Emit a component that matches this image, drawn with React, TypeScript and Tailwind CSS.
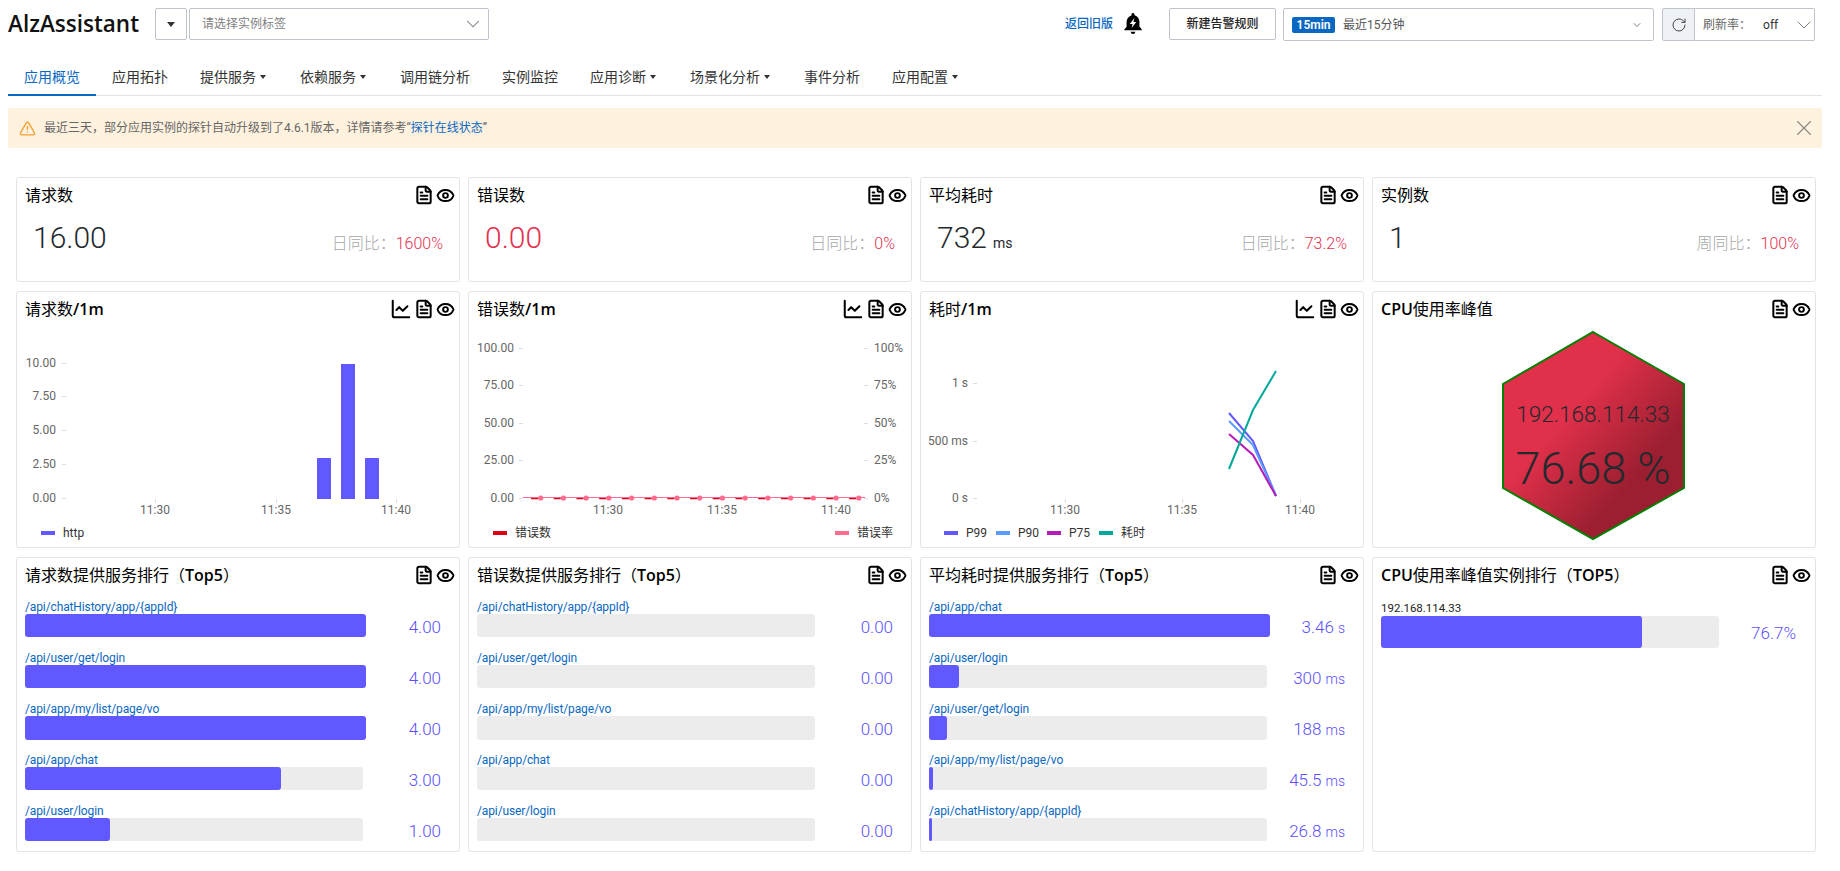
import type { ReactNode } from "react";
import { ChevronDown, RotateCw, TriangleAlert, X, FileText, Eye, ChartLine } from "lucide-react";

const BAR = "#6258ff";

const tabs = [
    { label: "应用概览", active: true },
    { label: "应用拓扑" },
    { label: "提供服务", caret: true },
    { label: "依赖服务", caret: true },
    { label: "调用链分析" },
    { label: "实例监控" },
    { label: "应用诊断", caret: true },
    { label: "场景化分析", caret: true },
    { label: "事件分析" },
    { label: "应用配置", caret: true },
];

const Caret = () => <span className="ml-1 inline-block h-0 w-0 border-x-[3px] border-t-[4px] border-x-transparent border-t-[#333] align-middle"></span>;

// latin parts of the card titles are heavier than the CJK next to them
const L = ({ children }: { children: ReactNode }) => <span className="font-semibold">{children}</span>;

const CardHeader = ({ title, chart }: { title: ReactNode; chart?: boolean }) => (
    <div className="flex h-9 items-center justify-between pb-0.5 pl-2 pr-1">
        <span className="font-['Open_Sans','Noto_Sans_CJK_SC',sans-serif] text-base leading-none text-black">{title}</span>
        <div className="flex items-center gap-[2px] text-black">
            {chart && <ChartLine size={22} strokeWidth={2.2} />}
            <FileText size={20} strokeWidth={2.4} />
            <Eye size={19} strokeWidth={2.4} />
        </div>
    </div>
);

const Stat = ({ title, value, unit, label, pct, red }: { title: string; value: string; unit?: string; label: string; pct: string; red?: boolean }) => (
    <div className="rounded-[3px] border border-[#e3e3e3]">
        <CardHeader title={title} />
        <div className="flex items-center justify-between pl-[16px] pr-4 pt-[6px]">
            <div className={`text-[30px] font-light leading-9 ${red ? "text-[#e5304f]" : "text-[#24292e]"}`}>
                {value}
                {unit && <span className="ml-1.5 text-sm font-normal">{unit}</span>}
            </div>
            <div className="pt-3 text-base font-light leading-5 text-[#a6a6a6]">
                {label}
                <span className="text-[#e5304f]">{pct}</span>
            </div>
        </div>
    </div>
);

const axisText = { fontSize: 12, fill: "#666", fontFamily: "Roboto, sans-serif" } as const;

// charts are drawn in page-like coordinates, x from the card's left edge
const ChartBox = ({ children }: { children: ReactNode }) => (
    <svg viewBox="0 0 442 219" className="h-[219px] w-[442px]">
        {children}
    </svg>
);

const YTicks = ({ items, right, tick }: { items: [string, number][]; right: number; tick: number }) => (
    <>
        {items.map(([t, y]) => (
            <g key={t}>
                <text x={right} y={y + 4} textAnchor="end" {...axisText}>{t}</text>
                <line x1={tick} x2={tick + 4} y1={y + 0.5} y2={y + 0.5} stroke="#ddd" />
            </g>
        ))}
    </>
);

const XLabels = ({ xs, tick }: { xs: number[]; tick?: boolean }) => (
    <>
        {["11:30", "11:35", "11:40"].map((t, i) => (
            <g key={t}>
                <text x={xs[i]} y={186} textAnchor="middle" {...axisText}>{t}</text>
                {tick && <line x1={xs[i] + 0.5} x2={xs[i] + 0.5} y1={171} y2={175} stroke="#ddd" />}
            </g>
        ))}
    </>
);

const Legend = ({ items }: { items: [string, string, number][] }) => (
    <>
        {items.map(([t, c, x]) => (
            <g key={t}>
                <rect x={x} y={203} width={14} height={4} fill={c} />
                <text x={x + 22} y={209} fontSize={12} fill="#333" fontFamily="Roboto,'Noto Sans CJK SC',sans-serif">{t}</text>
            </g>
        ))}
    </>
);

const RequestChart = () => (
    <ChartBox>
        <YTicks right={39} tick={45} items={[["10.00", 35], ["7.50", 68], ["5.00", 102], ["2.50", 136], ["0.00", 170]]} />
        <XLabels xs={[138, 259, 379]} tick />
        <rect x={300} y={130} width={14} height={41} fill={BAR} />
        <rect x={324} y={36} width={14} height={135} fill={BAR} />
        <rect x={348} y={130} width={14} height={41} fill={BAR} />
        <Legend items={[["http", BAR, 24]]} />
    </ChartBox>
);

const ErrorChart = () => {
    const dots = [0, 1, 2, 3, 4, 5, 6, 7, 8, 9, 10, 11, 12, 13, 14].map((i) => 71.7 + i * 22.72);
    return (
        <ChartBox>
            <YTicks right={45} tick={50} items={[["100.00", 20], ["75.00", 57], ["50.00", 95], ["25.00", 132], ["0.00", 170]]} />
            {[["100%", 20], ["75%", 57], ["50%", 95], ["25%", 132], ["0%", 170]].map(([t, y]) => (
                <g key={t}>
                    <line x1={395} x2={399} y1={Number(y) + 0.5} y2={Number(y) + 0.5} stroke="#ddd" />
                    <text x={405} y={Number(y) + 4} {...axisText}>{t}</text>
                </g>
            ))}
            <XLabels xs={[139, 253, 367]} />
            <line x1={54} x2={396} y1={170.5} y2={170.5} stroke="#e00016" strokeWidth={1.5} strokeDasharray="7 15.72" strokeDashoffset={-8} />
            <line x1={54} x2={396} y1={169.5} y2={169.5} stroke="#ff6b8f" strokeWidth={1.2} />
            {dots.map((x) => <circle key={x} cx={x} cy={170} r={2.6} fill="#ff6b8f" />)}
            <Legend items={[["错误数", "#e00016", 24], ["错误率", "#ff6b8f", 366]]} />
        </ChartBox>
    );
};

const LatencyChart = () => {
    const lines: [string, string][] = [
        [BAR, "308,85 332,113 355,168"],
        ["#5b9bff", "308,93 332,117 355,168"],
        ["#b51cb8", "308,106 332,127 355,168"],
        ["#00a99a", "308,141 332,82 355,43"],
    ];
    return (
        <ChartBox>
            <YTicks right={47} tick={52} items={[["1 s", 55], ["500 ms", 113], ["0 s", 170]]} />
            <XLabels xs={[144, 261, 379]} tick />
            {lines.map(([c, p]) => <polyline key={c} points={p} fill="none" stroke={c} strokeWidth={2} />)}
            <Legend items={[["P99", BAR, 23], ["P90", "#5b9bff", 75], ["P75", "#b51cb8", 126], ["耗时", "#00a99a", 178]]} />
        </ChartBox>
    );
};

const Hexagon = () => (
    <svg viewBox="0 0 442 219" className="h-[219px] w-[442px]">
        <defs>
            <linearGradient id="hex" x1="0" y1="0" x2="1" y2="1">
                <stop offset="0.38" stopColor="#e0304a" />
                <stop offset="0.72" stopColor="#9b1f30" />
            </linearGradient>
        </defs>
        <polygon points="220,4 311,56 311,160 220,211 130,160 130,56" fill="url(#hex)" stroke="#008000" strokeWidth={2} />
        <text x={220} y={94} textAnchor="middle" fontSize={22.5} fontWeight={300} fill="#24292e" fontFamily="Roboto, sans-serif">192.168.114.33</text>
        <text x={220} y={156} textAnchor="middle" fontSize={45} fontWeight={300} fill="#24292e" fontFamily="Roboto, sans-serif">76.68 %</text>
    </svg>
);

type Row = { path: string; pct: number; value: string; unit?: string };

const RankCard = ({ title, rows }: { title: ReactNode; rows: Row[] }) => (
    <div className="rounded-[3px] border border-[#e3e3e3]">
        <CardHeader title={title} />
        <div className="flex flex-col gap-[14px] pt-[6px]">
            {rows.map((r, i) => (
                <div key={r.path} className="flex items-start pl-2">
                    <div className="w-[338px]">
                        <div className="h-[14px] text-xs leading-[14px] tracking-[-0.01em] text-[#0a67c2]">{r.path}</div>
                        <div className={`rounded-[3px] bg-[#ececec] ${i === 2 ? "h-6 -mb-px" : "h-[23px]"}`}>
                            {/* full bars overshoot the track by a few px, same as the reference */}
                            <div className={`h-full rounded-[3px] bg-[#6258ff] ${r.pct === 100 ? "w-[341px]" : ""}`} style={r.pct === 100 ? undefined : { width: `${r.pct}%` }}></div>
                        </div>
                    </div>
                    <div className="mt-[14px] h-[23px] flex-1 whitespace-nowrap pr-[18px] text-right text-[17px] font-light leading-[26px] text-[#5a4fff]">
                        {r.value}
                        {r.unit && <span className="ml-1 text-sm">{r.unit}</span>}
                    </div>
                </div>
            ))}
        </div>
    </div>
);

const CpuCard = () => (
    <div className="rounded-[3px] border border-[#e3e3e3]">
        <CardHeader title={<><L>CPU</L>使用率峰值实例排行（<L>TOP5</L>）</>} />
        <div className="flex items-end pl-2 pt-[6px]">
            <div className="w-[338px]">
                <div className="h-4 text-[11.5px] leading-4 text-[#222]">192.168.114.33</div>
                <div className="h-8 rounded-[3px] bg-[#ececec]">
                    <div className="h-full w-[77.3%] rounded-[3px] bg-[#6258ff]"></div>
                </div>
            </div>
            <div className="h-8 flex-1 pr-[19px] text-right text-[17px] font-light leading-[34px] text-[#5a4fff]">76.7%</div>
        </div>
    </div>
);

const reqRows: Row[] = [
    { path: "/api/chatHistory/app/{appId}", pct: 100, value: "4.00" },
    { path: "/api/user/get/login", pct: 100, value: "4.00" },
    { path: "/api/app/my/list/page/vo", pct: 100, value: "4.00" },
    { path: "/api/app/chat", pct: 75.7, value: "3.00" },
    { path: "/api/user/login", pct: 25.2, value: "1.00" },
];
const errRows: Row[] = reqRows.map((r) => ({ path: r.path, pct: 0, value: "0.00" }));
const latRows: Row[] = [
    { path: "/api/app/chat", pct: 100, value: "3.46", unit: "s" },
    { path: "/api/user/login", pct: 8.9, value: "300", unit: "ms" },
    { path: "/api/user/get/login", pct: 5.4, value: "188", unit: "ms" },
    { path: "/api/app/my/list/page/vo", pct: 1.2, value: "45.5", unit: "ms" },
    { path: "/api/chatHistory/app/{appId}", pct: 0.9, value: "26.8", unit: "ms" },
];

export default function App() {
    return (
        <div className="h-[871px] w-[1840px] overflow-hidden bg-white pl-2 pr-[18px] font-['Roboto','Noto_Sans_CJK_SC',sans-serif]">
            <header className="flex h-12 items-start pt-2">
                <h1 className="w-[147px] font-['Open_Sans',sans-serif] text-[22.5px] font-semibold leading-8 text-[#111]">AlzAssistant</h1>
                <button className="flex h-8 w-8 items-center justify-center rounded-[2px] border border-[#bfc3cc]">
                    <span className="h-0 w-0 border-x-[4px] border-t-[5px] border-x-transparent border-t-[#333]"></span>
                </button>
                <div className="ml-[2px] flex h-8 w-[300px] items-center justify-between rounded-[2px] border border-[#bfc3cc] pl-3 pr-1 text-xs text-[#808080]">
                    请选择实例标签
                    <ChevronDown size={22} strokeWidth={1.1} className="text-[#777]" />
                </div>
                <a className="ml-[576px] text-xs font-medium leading-8 text-[#0a67c2]">返回旧版</a>
                <svg viewBox="0 0 24 24" className="ml-[9px] mt-[3px] h-6 w-[22px]">
                    <path d="M12 1a1.7 1.7 0 0 1 1.7 1.7v.8c3.4 1 5.3 3.8 5.3 7.2v5l2.500 3v1.300h-19V19l2.500-3v-5c0-3.400 1.900-6.200 5.300-7.200v-.8A1.700 1.700 0 0 1 12 1z" fill="#000" />
                    <path d="M13.500 6.500 8.500 13h3l-1 4.500 5-6.500h-3z" fill="#fff" />
                    <path d="M9.500 21.500h5a2.500 2.500 0 0 1-5 0z" fill="#000" />
                </svg>
                <button className="ml-[25px] h-8 w-[107px] rounded-[2px] border border-[#bfc3cc] text-xs font-medium text-[#222]">新建告警规则</button>
                <div className="ml-[7px] flex h-[33px] w-[371px] items-center rounded-[2px] border border-[#bfc3cc] pl-2 pr-2.5 text-xs text-[#555]">
                    <span className="flex h-4 w-[43px] items-center justify-center rounded-[2px] bg-[#0a67c2] text-xs font-semibold text-white">15min</span>
                    <span className="ml-2 flex-1">最近15分钟</span>
                    <ChevronDown size={12} strokeWidth={1.5} className="text-[#555]" />
                </div>
                <button className="ml-2 flex h-[33px] w-[33px] items-center justify-center rounded-l-[2px] border border-[#bfc3cc] bg-[#eef1f6] text-[#444]">
                    <RotateCw size={16} strokeWidth={1.5} />
                </button>
                <div className="flex h-[33px] w-[120px] items-center rounded-r-[2px] border border-l-0 border-[#bfc3cc] pl-2 text-xs text-[#666]">
                    <span>刷新率：</span>
                    <span className="ml-3 flex-1 text-[#333]">off</span>
                    <ChevronDown size={24} strokeWidth={0.9} className="-mr-0.5 text-[#777]" />
                </div>
            </header>
            <nav className="flex h-12 items-end border-b border-[#e4e4e4] pb-0">
                {tabs.map((t) => (
                    <div
                        key={t.label}
                        className={`-mb-px flex h-9 items-center whitespace-nowrap border-b-2 px-4 text-sm ${t.active ? "border-[#0a67c2] text-[#0a67c2]" : "border-transparent text-[#333]"} ${t.caret ? "mr-[2px]" : ""}`}
                    >
                        {t.label}
                        {t.caret && <Caret />}
                    </div>
                ))}
            </nav>
            <div className="mt-3 flex h-10 items-center rounded-[3px] bg-[#fef1de] pl-[11px] pr-[5px] text-xs text-[#666]">
                <TriangleAlert size={17} strokeWidth={2} className="text-[#f5a033]" />
                <span className="ml-2 flex-1">
                    最近三天，部分应用实例的探针自动升级到了4.6.1版本，详情请参考“<a className="text-[#0a67c2]">探针在线状态</a>”
                </span>
                <X size={26} strokeWidth={1} className="text-[#888]" />
            </div>
            <main className="ml-2 mt-[29px] grid w-[1800px] grid-cols-4 grid-rows-[105px_257px_295px] gap-x-2 gap-y-[9px]">
                <Stat title="请求数" value="16.00" label="日同比：" pct="1600%" />
                <Stat title="错误数" value="0.00" label="日同比：" pct="0%" red />
                <Stat title="平均耗时" value="732" unit="ms" label="日同比：" pct="73.2%" />
                <Stat title="实例数" value="1" label="周同比：" pct="100%" />

                <div className="rounded-[3px] border border-[#e3e3e3]">
                    <CardHeader title={<>请求数<L>/1m</L></>} chart />
                    <RequestChart />
                </div>
                <div className="rounded-[3px] border border-[#e3e3e3]">
                    <CardHeader title={<>错误数<L>/1m</L></>} chart />
                    <ErrorChart />
                </div>
                <div className="rounded-[3px] border border-[#e3e3e3]">
                    <CardHeader title={<>耗时<L>/1m</L></>} chart />
                    <LatencyChart />
                </div>
                <div className="rounded-[3px] border border-[#e3e3e3]">
                    <CardHeader title={<><L>CPU</L>使用率峰值</>} />
                    <Hexagon />
                </div>

                <RankCard title={<>请求数提供服务排行（<L>Top5</L>）</>} rows={reqRows} />
                <RankCard title={<>错误数提供服务排行（<L>Top5</L>）</>} rows={errRows} />
                <RankCard title={<>平均耗时提供服务排行（<L>Top5</L>）</>} rows={latRows} />
                <CpuCard />
            </main>
        </div>
    );
}
